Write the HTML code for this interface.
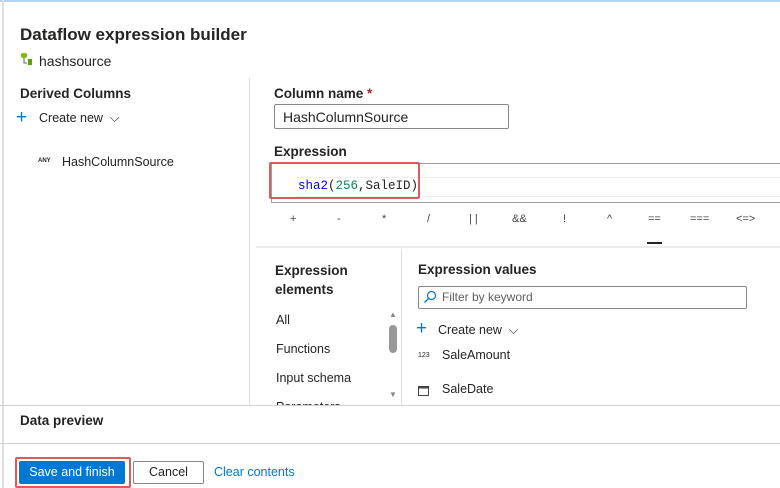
<!DOCTYPE html>
<html><head><style>
*{margin:0;padding:0;box-sizing:border-box}
body{width:780px;height:488px;overflow:hidden;background:#fff;font-family:"Liberation Sans",sans-serif;color:#252423;position:relative}
.a{position:absolute;white-space:nowrap}
.mono{font-family:"Liberation Mono",monospace}
.h{font-weight:bold;font-size:13.5px}
</style></head><body>
<div class="a" style="left:0;top:0;width:780px;height:2px;background:#b5d4ef"></div>
<div class="a" style="left:2px;top:0;width:2px;height:488px;background:#e1dfdd"></div>
<div class="a" style="left:20px;top:25px;font-size:17px;font-weight:bold">Dataflow expression builder</div>
<svg class="a" style="left:20px;top:52px" width="14" height="14"><rect x="1" y="1" width="6" height="5" rx="2" fill="#7fba00"/><path d="M4 6v5h3" stroke="#666" fill="none"/><rect x="8" y="7" width="4" height="6" fill="#57a300"/></svg>
<div class="a" style="left:39px;top:53px;font-size:14px">hashsource</div>
<div class="a" style="left:249px;top:78px;width:1px;height:327px;background:#e1dfdd"></div>
<div class="a h" style="left:20px;top:86px">Derived Columns</div>
<div class="a" style="left:16px;top:107px;font-size:19px;color:#0078d4">+</div>
<div class="a" style="left:39px;top:111px;font-size:12.5px">Create new &nbsp;⌵</div>
<div class="a" style="left:38px;top:158px;font-size:6px;font-weight:bold">ANY</div>
<div class="a" style="left:62px;top:155px;font-size:12.5px">HashColumnSource</div>
<div class="a h" style="left:274px;top:86px">Column name <span style="color:#a4262c">*</span></div>
<div class="a" style="left:274px;top:104px;width:235px;height:25px;border:1px solid #8a8886;border-radius:2px;font-size:14px;padding:4px 8px">HashColumnSource</div>
<div class="a h" style="left:274px;top:144px">Expression</div>
<div class="a" style="left:271px;top:163px;width:515px;height:40px;border:1px solid #a19f9d"></div>
<div class="a" style="left:296px;top:177px;width:484px;height:20px;border-top:1px solid #eee;border-bottom:1px solid #eee"></div>
<div class="a mono" style="left:298px;top:179px;font-size:12.5px"><span style="color:#0000ff">sha2</span>(<span style="color:#098658">256</span>,SaleID)</div>
<div class="a" style="left:269px;top:162px;width:151px;height:37px;border:2px solid #e05a5a;border-radius:2px"></div>
<div class="a" style="top:213px;left:0;width:780px;font-size:11px;color:#444">
<span class="a" style="left:290px">+</span><span class="a" style="left:337px">-</span><span class="a" style="left:382px">*</span><span class="a" style="left:427px">/</span><span class="a" style="left:469px">| |</span><span class="a" style="left:512px">&amp;&amp;</span><span class="a" style="left:563px">!</span><span class="a" style="left:607px">^</span><span class="a" style="left:648px">==</span><span class="a" style="left:690px">===</span><span class="a" style="left:736px">&lt;=&gt;</span></div>
<div class="a" style="left:647px;top:242px;width:15px;height:2px;background:#252423"></div>
<div class="a" style="left:256px;top:246px;width:524px;height:2px;background:#edebe9"></div>
<div class="a" style="left:401px;top:250px;width:1px;height:155px;background:#e1dfdd"></div>
<div class="a h" style="left:275px;top:261px;line-height:19px">Expression<br>elements</div>
<div class="a" style="left:276px;top:313px;font-size:12.5px">All</div>
<div class="a" style="left:276px;top:342px;font-size:12.5px">Functions</div>
<div class="a" style="left:276px;top:371px;font-size:12.5px">Input schema</div>
<div class="a" style="left:276px;top:400px;font-size:12.5px;height:5px;overflow:hidden">Parameters</div>
<div class="a" style="left:389px;top:310px;font-size:8px;color:#888">▲</div>
<div class="a" style="left:389px;top:325px;width:8px;height:28px;background:#999;border-radius:4px"></div>
<div class="a" style="left:389px;top:390px;font-size:8px;color:#888">▼</div>
<div class="a h" style="left:418px;top:262px">Expression values</div>
<div class="a" style="left:418px;top:286px;width:329px;height:23px;border:1px solid #8a8886;border-radius:2px;font-size:12px;color:#605e5c;padding:3px 0 0 23px">Filter by keyword</div>
<svg class="a" style="left:423px;top:290px" width="14" height="14"><circle cx="8.5" cy="5.5" r="4" stroke="#0078d4" fill="none" stroke-width="1.2"/><path d="M5.5 8.5L1.5 12.5" stroke="#0078d4" stroke-width="1.3"/></svg>
<div class="a" style="left:416px;top:318px;font-size:19px;color:#0078d4">+</div>
<div class="a" style="left:438px;top:323px;font-size:12.5px">Create new &nbsp;⌵</div>
<div class="a" style="left:418px;top:352px;font-size:7px">123</div>
<div class="a" style="left:442px;top:348px;font-size:12.5px">SaleAmount</div>
<svg class="a" style="left:418px;top:384px" width="11" height="12"><rect x="0.5" y="2.5" width="10" height="9" fill="none" stroke="#444"/><rect x="0.5" y="2.5" width="10" height="2" fill="#444"/></svg>
<div class="a" style="left:442px;top:382px;font-size:12.5px">SaleDate</div>
<div class="a" style="left:0;top:405px;width:780px;height:1px;background:#d2d0ce"></div>
<div class="a h" style="left:20px;top:413px">Data preview</div>
<div class="a" style="left:0;top:443px;width:780px;height:1px;background:#d2d0ce"></div>
<div class="a" style="left:15px;top:457px;width:116px;height:31px;border:2px solid #e05a5a;border-radius:2px"></div>
<div class="a" style="left:19px;top:461px;width:106px;height:23px;background:#0078d4;color:#fff;font-size:12.5px;text-align:center;line-height:23px;border-radius:2px">Save and finish</div>
<div class="a" style="left:133px;top:461px;width:71px;height:23px;border:1px solid #8a8886;font-size:12.5px;text-align:center;line-height:21px;border-radius:2px">Cancel</div>
<div class="a" style="left:214px;top:465px;font-size:12.5px;color:#0078d4">Clear contents</div>
</body></html>
